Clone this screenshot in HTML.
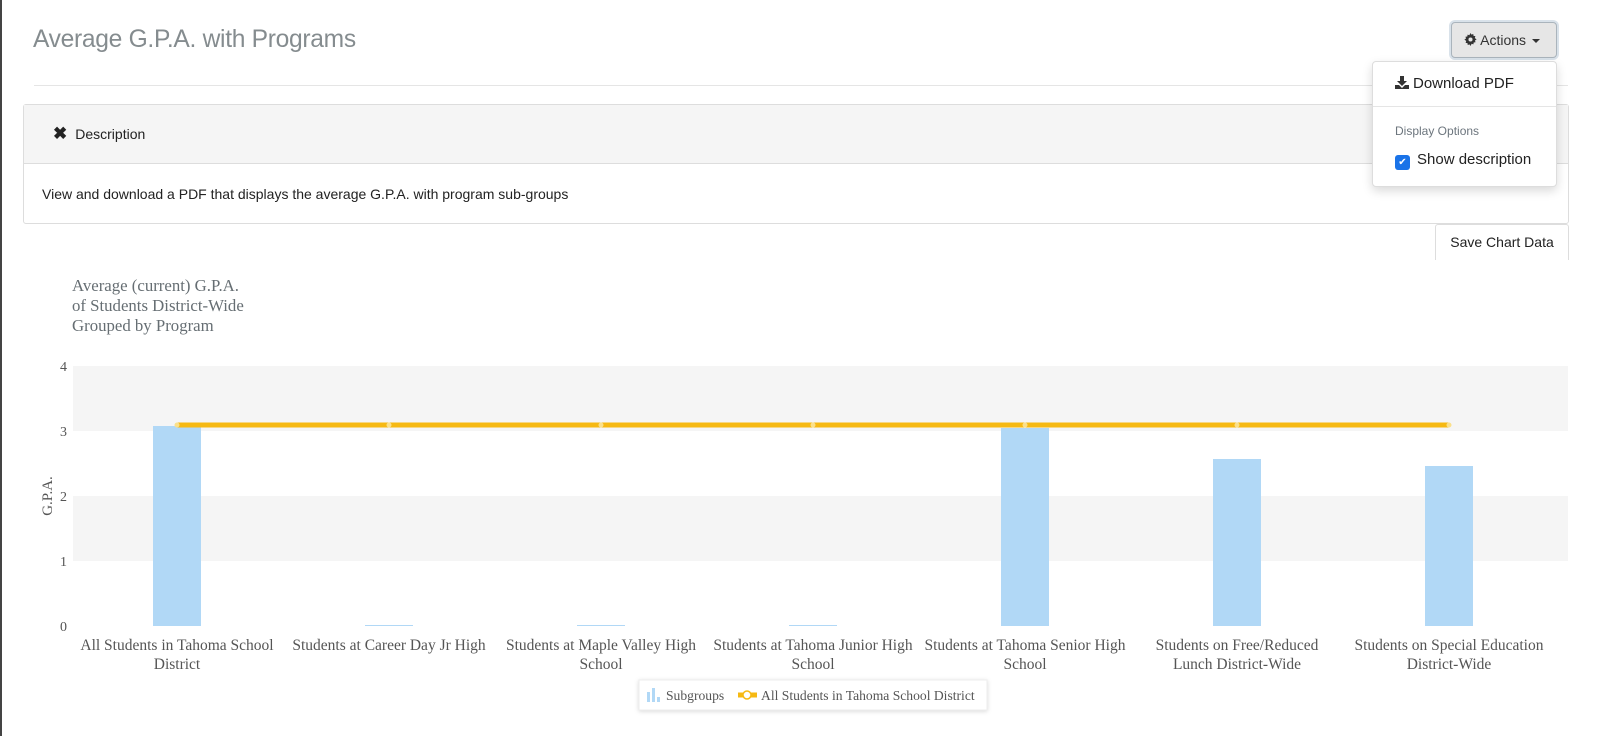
<!DOCTYPE html>
<html><head><meta charset="utf-8"><style>
*{margin:0;padding:0;box-sizing:border-box}
body{width:1600px;height:736px;background:#fff;position:relative;overflow:hidden;font-family:"Liberation Sans",Arial,sans-serif;color:#333;border-left:2px solid #444}
.abs{position:absolute}
</style></head><body>
<div class="abs" style="left:31px;top:26px;font-size:24.6px;color:#858c8f;letter-spacing:-0.3px">Average G.P.A. with Programs</div>
<div class="abs" style="left:32px;top:85px;width:1534px;height:1px;background:#e5e5e5"></div>
<div class="abs" style="left:1449px;top:22px;width:106px;height:36px;border:1px solid #aab4bc;border-radius:4px;background:#e6e6e6;box-shadow:0 0 0 2px #d9e2ea;font-size:14px;line-height:34px;padding-left:12px;color:#333"><svg width="13" height="13" viewBox="0 0 16 16" style="vertical-align:-1px"><path fill="#333" d="M8 0l1.2 2 2.2-.7.3 2.3 2.3.3-.7 2.2L15.5 8l-2 1.2.7 2.2-2.3.3-.3 2.3-2.2-.7L8 16l-1.2-2-2.2.7-.3-2.3-2.3-.3.7-2.2L.5 8l2-1.2-.7-2.2 2.3-.3.3-2.3 2.2.7z"/><circle cx="8" cy="8" r="2.5" fill="#e6e6e6"/></svg> Actions <span style="display:inline-block;border-left:4px solid transparent;border-right:4px solid transparent;border-top:4px solid #333;vertical-align:2px;margin-left:2px"></span></div>
<div class="abs" style="left:21px;top:104px;width:1546px;height:120px;border:1px solid #ddd;border-radius:3px">
<div style="height:59px;background:#f5f5f5;border-bottom:1px solid #ddd;font-size:14px;line-height:58px;padding-left:29px;color:#222"><b style="font-size:17px;margin-right:8px">✖</b>Description</div>
<div style="font-size:14px;padding:22px 0 0 18px;color:#222">View and download a PDF that displays the average G.P.A. with program sub-groups</div>
</div>
<div class="abs" style="left:1370px;top:61px;width:185px;height:126px;background:#fff;border:1px solid #ddd;border-radius:4px;box-shadow:0 4px 10px rgba(0,0,0,.15)">
<div style="height:45px;font-size:15px;line-height:44px;padding-left:22px;color:#222;border-bottom:1px solid #e5e5e5"><svg width="14" height="13" viewBox="0 0 14 13" style="margin-right:4px;vertical-align:-1px"><path fill="#333" d="M5 0h4v5h3L7 10 2 5h3zM0 9h4l3 3 3-3h4v4H0z"/></svg>Download PDF</div>
<div style="font-size:12px;color:#6c757d;padding:17px 0 0 22px">Display Options</div>
<div style="font-size:15px;color:#222;padding:13px 0 0 22px;line-height:18px"><span style="display:inline-block;width:15px;height:15px;background:#1a73e8;border-radius:3px;color:#fff;font-size:10px;line-height:15px;text-align:center;vertical-align:-1px;margin-right:7px">✔</span>Show description</div>
</div>
<div class="abs" style="left:1433px;top:224px;width:134px;height:36px;border:1px solid #ddd;border-bottom:none;border-radius:3px 3px 0 0;font-size:14px;line-height:35px;text-align:center;color:#222">Save Chart Data</div>
<svg class="abs" style="left:0;top:0" width="1600" height="736" font-family="Liberation Serif,serif">
<text fill="#666e73" font-size="16.8"><tspan x="70" y="291">Average (current) G.P.A.</tspan><tspan x="70" y="311">of Students District-Wide</tspan><tspan x="70" y="331">Grouped by Program</tspan></text>
<rect x="71" y="366" width="1495" height="65" fill="#f5f5f5"/>
<rect x="71" y="496" width="1495" height="65" fill="#f5f5f5"/>
<g fill="#555" font-size="14" text-anchor="end"><text x="65" y="371">4</text><text x="65" y="436">3</text><text x="65" y="501">2</text><text x="65" y="566">1</text><text x="65" y="631">0</text></g>
<text transform="translate(50,496) rotate(-90)" text-anchor="middle" font-size="15" fill="#555">G.P.A.</text>
<g fill="#b1d8f6"><rect x="151" y="426" width="48" height="200"/><rect x="363" y="625" width="48" height="1"/><rect x="575" y="625" width="48" height="1"/><rect x="787" y="625" width="48" height="1"/><rect x="999" y="428" width="48" height="198"/><rect x="1211" y="459" width="48" height="167"/><rect x="1423" y="466" width="48" height="160"/></g>
<line x1="175" y1="425" x2="1447" y2="425" stroke="#f6b913" stroke-width="5"/>
<g fill="#fbe08a"><circle cx="175" cy="425" r="2.5"/><circle cx="387" cy="425" r="2.5"/><circle cx="599" cy="425" r="2.5"/><circle cx="811" cy="425" r="2.5"/><circle cx="1023" cy="425" r="2.5"/><circle cx="1235" cy="425" r="2.5"/><circle cx="1447" cy="425" r="2.5"/></g>
<g fill="#555" font-size="15.5" text-anchor="middle">
<text x="175" y="650">All Students in Tahoma School</text><text x="175" y="669">District</text>
<text x="387" y="650">Students at Career Day Jr High</text>
<text x="599" y="650">Students at Maple Valley High</text><text x="599" y="669">School</text>
<text x="811" y="650">Students at Tahoma Junior High</text><text x="811" y="669">School</text>
<text x="1023" y="650">Students at Tahoma Senior High</text><text x="1023" y="669">School</text>
<text x="1235" y="650">Students on Free/Reduced</text><text x="1235" y="669">Lunch District-Wide</text>
<text x="1447" y="650">Students on Special Education</text><text x="1447" y="669">District-Wide</text>
</g>
<rect x="637" y="680" width="348" height="30" fill="#fff" stroke="#eee" filter="drop-shadow(0 1px 2px rgba(0,0,0,.15))"/>
<g fill="#b1d8f6"><rect x="645" y="692" width="3" height="10"/><rect x="650" y="688" width="3" height="14"/><rect x="655" y="697" width="3" height="5"/></g>
<text x="664" y="700" font-size="13.6" fill="#555">Subgroups</text>
<line x1="736" y1="695" x2="755" y2="695" stroke="#f6b913" stroke-width="5"/><circle cx="745" cy="695" r="4" fill="#fff" stroke="#f6b913" stroke-width="1.5"/>
<text x="759" y="700" font-size="13.6" fill="#555">All Students in Tahoma School District</text>
</svg>
</body></html>
